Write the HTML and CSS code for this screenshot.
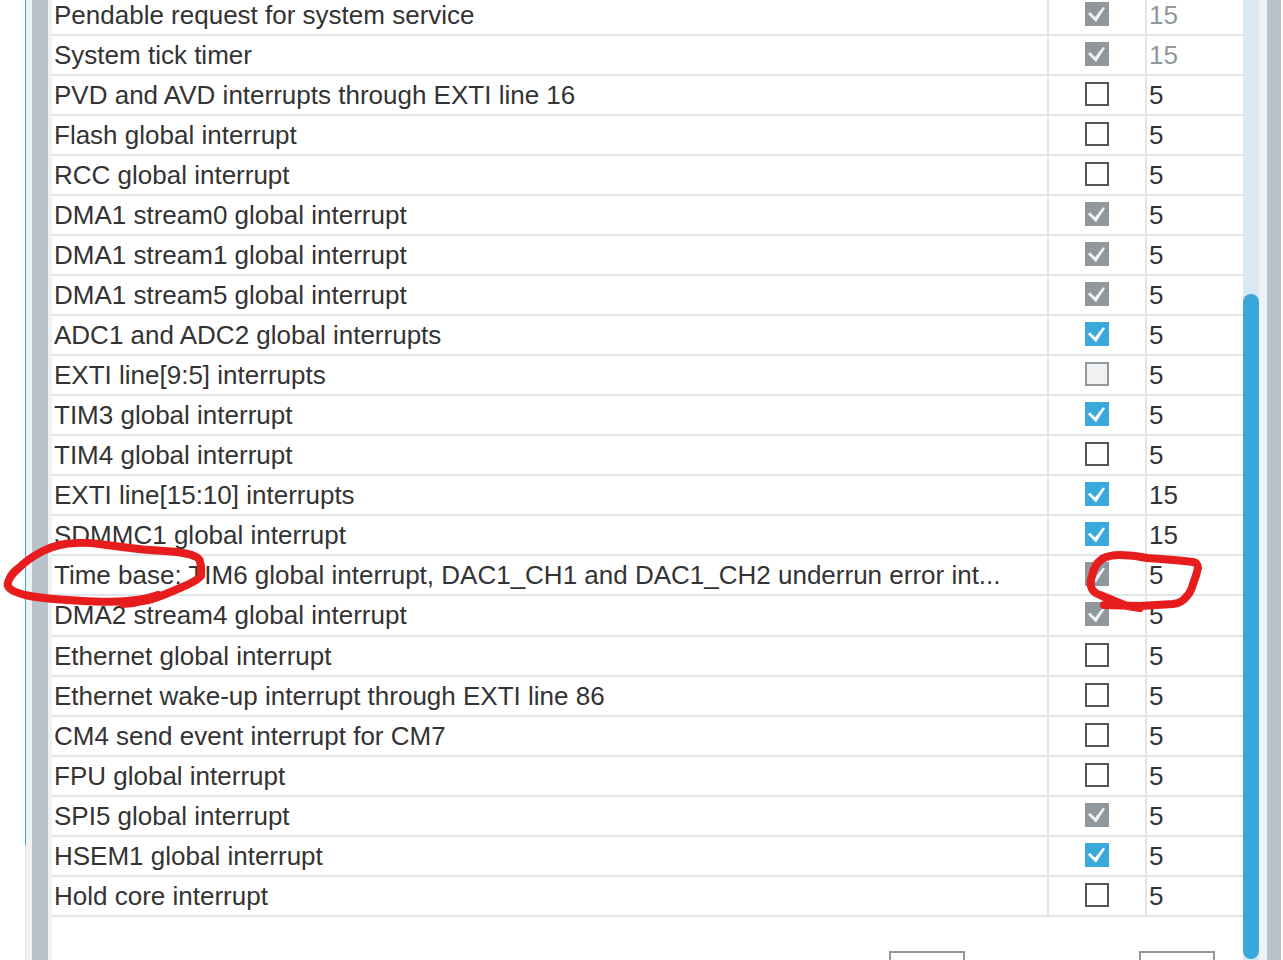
FILE: index.html
```html
<!DOCTYPE html>
<html lang="en">
<head>
<meta charset="utf-8">
<title>NVIC</title>
<link rel="stylesheet" href="styles.css">
</head>
<body>

<div class="window">
	<div class="side"></div>
	<div class="side-scroll"><div class="side-thumb"></div></div>
	<div class="gap"></div>
	<div class="sash"></div>
	<div class="edge"></div>

	<div class="content">
		<table class="nvic">
			<colgroup><col><col class="col-enabled"><col class="col-priority"></colgroup>
			<tbody>
			<tr class="locked"><td><label for="irq1">Pendable request for system service</label></td><td><input type="checkbox" id="irq1" checked disabled></td><td>15</td></tr>
			<tr class="locked"><td><label for="irq2">System tick timer</label></td><td><input type="checkbox" id="irq2" checked disabled></td><td>15</td></tr>
			<tr><td><label for="irq3">PVD and AVD interrupts through EXTI line 16</label></td><td><input type="checkbox" id="irq3"></td><td>5</td></tr>
			<tr><td><label for="irq4">Flash global interrupt</label></td><td><input type="checkbox" id="irq4"></td><td>5</td></tr>
			<tr><td><label for="irq5">RCC global interrupt</label></td><td><input type="checkbox" id="irq5"></td><td>5</td></tr>
			<tr><td><label for="irq6">DMA1 stream0 global interrupt</label></td><td><input type="checkbox" id="irq6" checked disabled></td><td>5</td></tr>
			<tr><td><label for="irq7">DMA1 stream1 global interrupt</label></td><td><input type="checkbox" id="irq7" checked disabled></td><td>5</td></tr>
			<tr><td><label for="irq8">DMA1 stream5 global interrupt</label></td><td><input type="checkbox" id="irq8" checked disabled></td><td>5</td></tr>
			<tr><td><label for="irq9">ADC1 and ADC2 global interrupts</label></td><td><input type="checkbox" id="irq9" checked></td><td>5</td></tr>
			<tr><td><label for="irq10">EXTI line[9:5] interrupts</label></td><td><input type="checkbox" id="irq10" disabled></td><td>5</td></tr>
			<tr><td><label for="irq11">TIM3 global interrupt</label></td><td><input type="checkbox" id="irq11" checked></td><td>5</td></tr>
			<tr><td><label for="irq12">TIM4 global interrupt</label></td><td><input type="checkbox" id="irq12"></td><td>5</td></tr>
			<tr><td><label for="irq13">EXTI line[15:10] interrupts</label></td><td><input type="checkbox" id="irq13" checked></td><td>15</td></tr>
			<tr><td><label for="irq14">SDMMC1 global interrupt</label></td><td><input type="checkbox" id="irq14" checked></td><td>15</td></tr>
			<tr><td><label for="irq15">Time base: TIM6 global interrupt, DAC1_CH1 and DAC1_CH2 underrun error int...</label></td><td><input type="checkbox" id="irq15" checked disabled></td><td>5</td></tr>
			<tr><td><label for="irq16">DMA2 stream4 global interrupt</label></td><td><input type="checkbox" id="irq16" checked disabled></td><td>5</td></tr>
			<tr><td><label for="irq17">Ethernet global interrupt</label></td><td><input type="checkbox" id="irq17"></td><td>5</td></tr>
			<tr><td><label for="irq18">Ethernet wake-up interrupt through EXTI line 86</label></td><td><input type="checkbox" id="irq18"></td><td>5</td></tr>
			<tr><td><label for="irq19">CM4 send event interrupt for CM7</label></td><td><input type="checkbox" id="irq19"></td><td>5</td></tr>
			<tr><td><label for="irq20">FPU global interrupt</label></td><td><input type="checkbox" id="irq20"></td><td>5</td></tr>
			<tr><td><label for="irq21">SPI5 global interrupt</label></td><td><input type="checkbox" id="irq21" checked disabled></td><td>5</td></tr>
			<tr><td><label for="irq22">HSEM1 global interrupt</label></td><td><input type="checkbox" id="irq22" checked></td><td>5</td></tr>
			<tr><td><label for="irq23">Hold core interrupt</label></td><td><input type="checkbox" id="irq23"></td><td>5</td></tr>
			</tbody>
		</table>
		<div class="fields">
			<input type="text" aria-label="Preemption Priority">
			<input type="text" aria-label="Sub Priority">
		</div>
	</div>

	<div class="scroll"><div class="thumb"></div></div>
	<div class="gap"></div>
	<div class="sash sash-right"></div>

	<svg class="mark mark-name" width="210" height="72" viewBox="0 0 210 72">
		<path d="M158 56C148 60 138 61 127 62C107 64 87 62 67 61C52 60 38 59 25 56C10 52 5 48 9 41C11 35 15 32 20 28C27 21 35 16 43 12C53 7 65 4 77 4C88 3 98 5 107 6C122 8 136 10 150 11C161 12 172 12 183 14C195 16 200 19 200 23C202 28 201 32 201 37C195 44 184 47 173 52C163 56 153 61 143 62C136 64 130 65 123 65"/>
	</svg>
	<svg class="mark mark-priority" width="120" height="66" viewBox="0 0 120 66">
		<path d="M21 55L57 56L90 54C98 53 101 50 104 46C108 42 109 38 110 34C112 29 114 23 115 18C115 14 114 13 110 12C95 10 80 9 64 8C55 6 46 5 37 5C30 5 24 6 19 9C12 14 10 20 9 26C7 31 7 35 9 39C11 43 14 44 17 45C26 49 35 52 44 56L57 58"/>
	</svg>
</div>

</body>
</html>
```
FILE: styles.css
```css
body {
	margin: 0;
	background-color: #ffffff;
	color: #333333;
	font-family: "Liberation Sans", Arial, sans-serif;
	font-size: 26px;
	line-height: 30px;
}

.window {
	position: relative;
	display: flex;
	height: 100vh;
	overflow: hidden;
}

.side {
	flex: 0 0 25px;
}

.side-scroll {
	flex: 0 0 1px;
	background-color: #dbe5ee;
}

.side-thumb {
	height: 88%;
	background-color: #39a9dc;
}

.gap {
	flex: 0 0 6px;
	background-color: #f0f1f3;
}

.sash {
	flex: 0 0 16px;
	background-color: #b7c3c9;
}

.edge {
	flex: 0 0 4px;
	background-color: #f0f1f3;
}

.content {
	flex: 1;
	min-width: 0;
}

/* scrolled a few pixels down, so the first row is cut */
.nvic {
	width: 100%;
	height: 921px;
	margin-top: -4px;
	table-layout: fixed;
	border-collapse: separate;
	border-spacing: 0;
}

.col-enabled {
	width: 98px;
}

.col-priority {
	width: 96px;
}

.nvic td {
	height: 38px;
	padding: 0 2px;
	border-bottom: 2px solid #e1e5e9;
	white-space: nowrap;
	overflow: hidden;
}

.nvic td + td {
	text-align: center;
}

.nvic td:last-child {
	text-align: left;
}

.nvic td:not(:last-child) {
	border-right: 2px solid #e1e5e9;
}

.nvic .locked td:last-child {
	color: #90979d;
}

input[type=checkbox] {
	appearance: none;
	display: block;
	box-sizing: border-box;
	width: 24px;
	height: 24px;
	margin: 0 auto 2px;
	border: 2px solid #555555;
	background-color: #ffffff;
}

input[type=checkbox]:disabled {
	border-color: #90979d;
	background-color: #f0f1f3;
}

input[type=checkbox]:checked {
	border: 0;
	background-color: #39a9dc;
}

input[type=checkbox]:checked:disabled {
	background-color: #90979d;
}

input[type=checkbox]:checked::before {
	content: "";
	display: block;
	width: 24px;
	height: 24px;
	background-color: #ffffff;
	clip-path: polygon(3px 12px, 5px 10px, 10px 15px, 18px 5px, 20px 6px, 11px 20px);
}

input[type=checkbox]:checked:disabled::before {
	background-color: #f0f1f3;
}

.fields {
	display: flex;
	justify-content: flex-end;
	gap: 174px;
	padding: 34px 28px 0 0;
}

.fields input {
	box-sizing: border-box;
	width: 76px;
	height: 40px;
	border: 2px solid #90979d;
	background-color: #ffffff;
	font: inherit;
}

.scroll {
	flex: 0 0 16px;
	background-color: #d8e8f5;
}

.thumb {
	height: 665px;
	margin-top: 294px;
	border-radius: 8px;
	background-color: #39a9dc;
}

.scroll + .gap {
	flex-basis: 8px;
}

.sash-right {
	flex-basis: 14px;
	margin-right: 2px;
}

/* hand-drawn marks over the table */
.mark {
	position: absolute;
	fill: none;
	stroke: #e71d1d;
	stroke-width: 8px;
	stroke-linecap: round;
	stroke-linejoin: round;
	pointer-events: none;
}

.mark-name {
	left: 0;
	top: 539px;
}

.mark-priority {
	left: 1083px;
	top: 550px;
}
```
